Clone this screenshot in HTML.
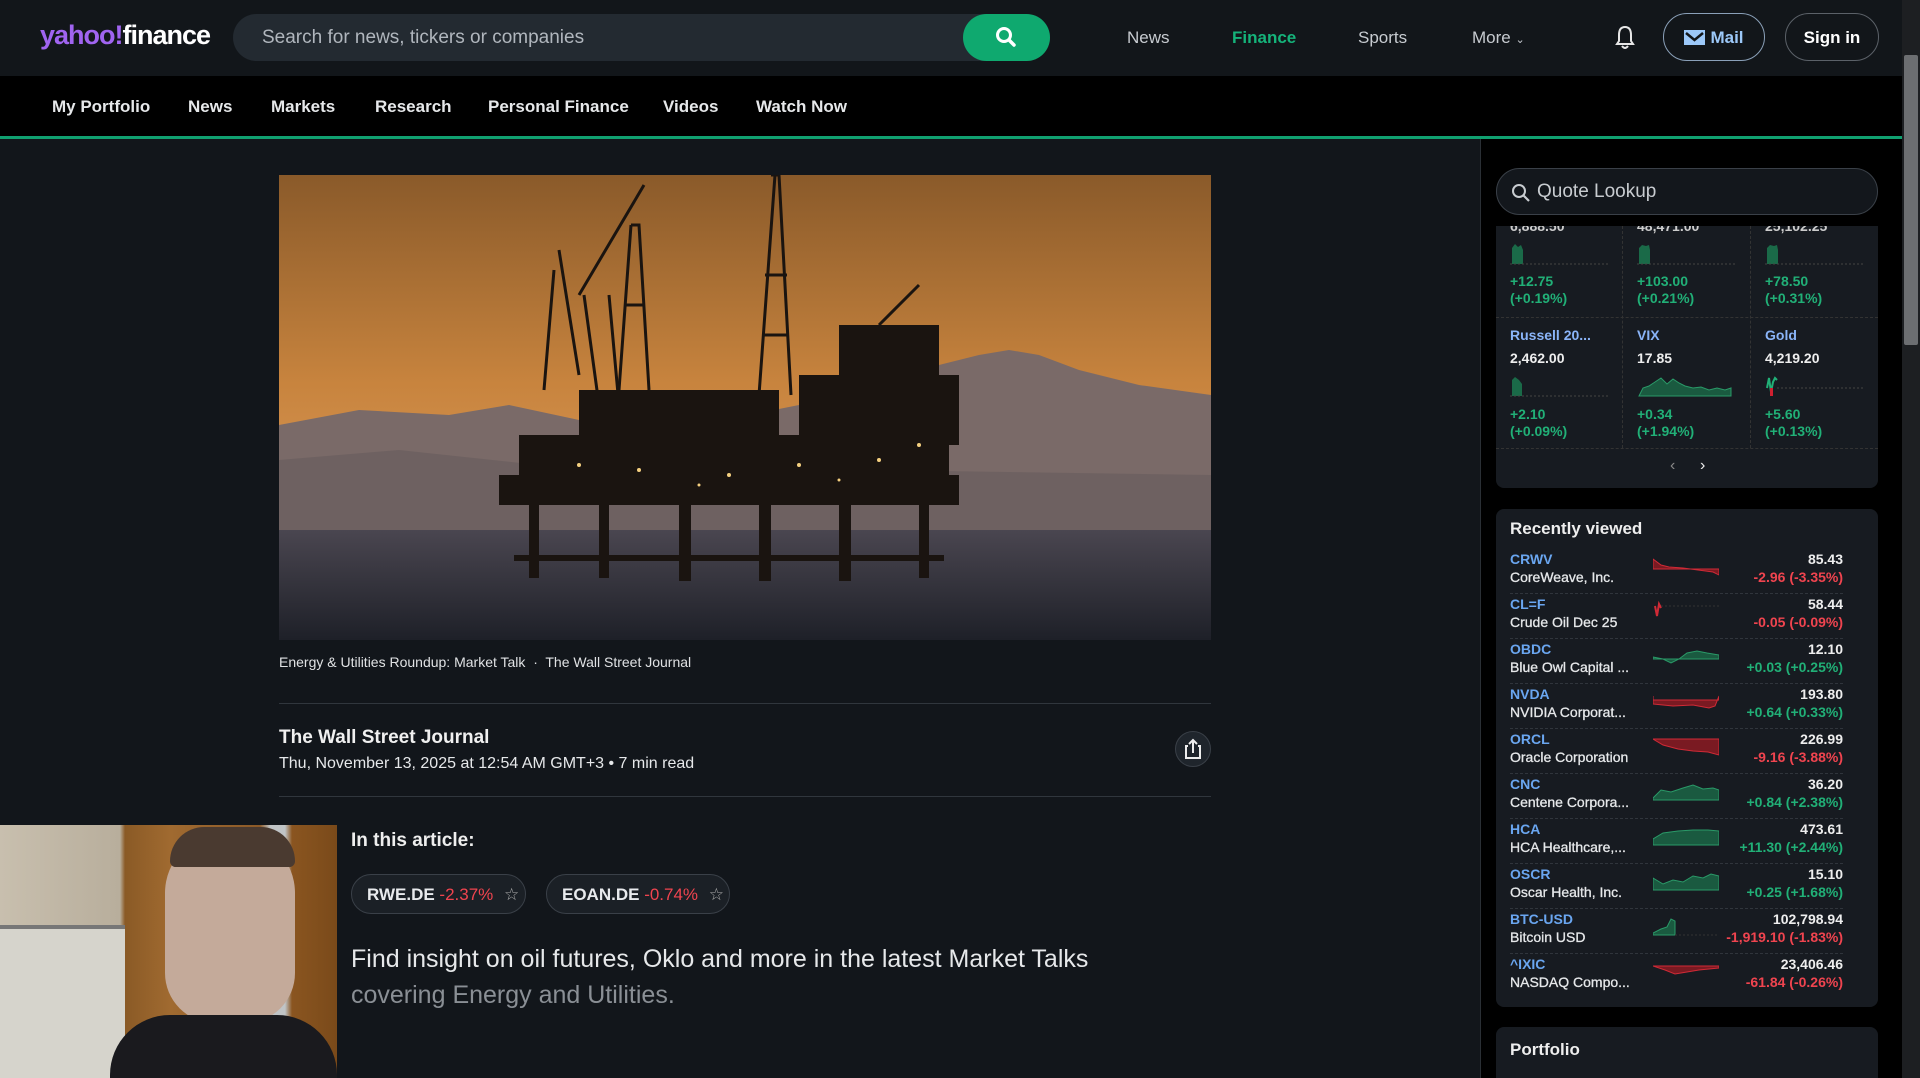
<!DOCTYPE html>
<html style="overflow:hidden;height:1078px"><head><meta charset="utf-8">
<style>
*{box-sizing:border-box;margin:0;padding:0}
body{width:1920px;height:1078px;overflow:hidden;background:#12161b;font-family:"Liberation Sans",Arial,sans-serif;color:#e8eaed;position:relative}
.abs{position:absolute}
.hdr{left:0;top:0;width:1902px;height:76px;background:#12161a}
.logo{left:40px;top:20px;font-size:27px;font-weight:bold;letter-spacing:-1px}
.search{left:233px;top:14px;width:817px;height:47px;border-radius:24px;background:#232a31;color:#b0b6bd;font-size:19px;padding:13px 0 0 29px}
.sbtn{left:963px;top:14px;width:87px;height:47px;border-radius:24px;background:#0fa96f}
.hl{top:28px;font-size:17px;color:#c7cbd0}
.pill{top:13px;height:48px;border-radius:24px;border:1.5px solid #5b6168;font-size:17px;font-weight:bold;color:#fff;text-align:center;padding-top:14px}
.sub{left:0;top:76px;width:1902px;height:60px;background:#000}
.sub span{position:absolute;top:21px;font-size:17px;font-weight:bold;color:#e6e8ea}
.gline{left:0;top:136px;width:1902px;height:3px;background:#10a070}
.side{left:1480px;top:139px;width:422px;height:939px;background:#000;border-left:1px solid #2a2f35}
.card{background:#171b21;border-radius:8px}
.scroll{left:1902px;top:0;width:18px;height:1078px;background:#1d1f22}
.g{color:#21b077}.r{color:#f0444f}.b{color:#8ab4f8}
.mk{position:absolute;font-size:14px;font-weight:bold;line-height:17px}
.row{position:absolute;left:14px;width:333px;height:45px;border-bottom:1px dashed #30353c;font-size:14px;font-weight:bold;line-height:18px}
.row .t{position:absolute;left:0;top:1px;color:#6aa6f0}
.row .n{position:absolute;left:0;top:19px;color:#e6e8ea;font-weight:normal;-webkit-text-stroke:.3px #e6e8ea}
.row .p{position:absolute;right:0;top:1px;color:#eee}
.row .c{position:absolute;right:0;top:19px}
.row svg{position:absolute;left:143px;top:6px}
.chip{top:874px;height:40px;border-radius:20px;border:1px solid #3a4048;background:#1b2026;font-size:17px;font-weight:bold;padding-top:10px;padding-left:15px}
</style></head><body>
<div class="abs hdr"></div>
<div class="abs logo"><span style="color:#a064f0">yahoo</span><span style="color:#a064f0">!</span><span style="color:#fff">finance</span></div>
<div class="abs search">Search for news, tickers or companies</div>
<div class="abs sbtn"><svg width="87" height="47"><circle cx="41" cy="21" r="6.5" fill="none" stroke="#fff" stroke-width="3"/><line x1="46" y1="26" x2="51" y2="31" stroke="#fff" stroke-width="3.5" stroke-linecap="round"/></svg></div>
<div class="abs hl" style="left:1127px">News</div>
<div class="abs hl" style="left:1232px;color:#15b37a;font-weight:bold">Finance</div>
<div class="abs hl" style="left:1358px">Sports</div>
<div class="abs hl" style="left:1472px">More <span style="font-size:11px">&#8964;</span></div>
<svg class="abs" style="left:1614px;top:25px" width="22" height="26"><path d="M11 2 C6 2 5 6 5 10 L5 16 L3 19 L19 19 L17 16 L17 10 C17 6 16 2 11 2Z M8 21 Q11 25 14 21" fill="none" stroke="#e6e6e6" stroke-width="2"/></svg>
<div class="abs pill" style="left:1663px;width:102px;border-color:#8aa0b8"><span style="display:inline-block;width:21px;height:15px;background:#9cc8f8;vertical-align:-2px;margin-right:5px;position:relative"><svg width="21" height="15" style="position:absolute;left:0;top:0"><path d="M2 3 L10.5 10 L19 3" fill="none" stroke="#12161a" stroke-width="2.5"/></svg></span><span style="color:#9cc8f8">Mail</span></div>
<div class="abs pill" style="left:1785px;width:94px">Sign in</div>
<div class="abs sub"><span style="left:52px">My Portfolio</span><span style="left:188px">News</span><span style="left:271px">Markets</span><span style="left:375px">Research</span><span style="left:488px">Personal Finance</span><span style="left:663px">Videos</span><span style="left:756px">Watch Now</span></div>
<div class="abs gline"></div>

<svg class="abs" style="left:279px;top:175px" width="932" height="465" viewBox="0 0 932 465">
<defs><linearGradient id="sky" x1="0" y1="0" x2="0" y2="1"><stop offset="0" stop-color="#8a5a2a"/><stop offset=".45" stop-color="#c8843e"/><stop offset=".75" stop-color="#d89858"/></linearGradient>
<linearGradient id="sea" x1="0" y1="0" x2="0" y2="1"><stop offset="0" stop-color="#4a4650"/><stop offset="1" stop-color="#1e2028"/></linearGradient></defs>
<rect width="932" height="465" fill="url(#sky)"/>
<path d="M0 250 L80 235 L170 240 L230 230 L300 245 L420 250 L520 230 L600 210 L660 190 L700 180 L730 175 L760 180 L800 195 L860 210 L932 220 L932 360 L0 360Z" fill="#7a6a68"/>
<path d="M0 285 L120 275 L260 290 L932 300 L932 360 L0 360Z" fill="#6a5e5e" opacity=".7"/>
<rect y="355" width="932" height="110" fill="url(#sea)"/>
<g fill="#1a1410">
<rect x="220" y="300" width="460" height="30"/>
<rect x="240" y="260" width="430" height="42"/>
<rect x="300" y="215" width="200" height="50"/>
<rect x="520" y="200" width="160" height="70"/>
<rect x="560" y="150" width="100" height="55"/>
<rect x="250" y="328" width="10" height="75"/><rect x="320" y="328" width="10" height="75"/><rect x="400" y="328" width="12" height="78"/><rect x="480" y="328" width="12" height="78"/><rect x="560" y="328" width="12" height="78"/><rect x="640" y="328" width="10" height="75"/>
<rect x="235" y="380" width="430" height="6"/>
</g>
<g stroke="#1a1410" fill="none" stroke-width="3">
<path d="M352 50 L360 50 L370 215 M352 50 L340 215 M345 130 L365 130"/>
<path d="M300 120 L365 10 M305 120 L320 230 M330 120 L340 230"/>
<path d="M492 0 L500 0 L512 220 M496 0 L480 220 M486 100 L508 100 M484 160 L510 160"/>
<path d="M280 75 L300 200 M275 95 L265 215"/>
<path d="M600 150 L640 110"/>
</g>
<g fill="#f5d080"><circle cx="300" cy="290" r="2"/><circle cx="360" cy="295" r="2"/><circle cx="450" cy="300" r="2"/><circle cx="520" cy="290" r="2"/><circle cx="600" cy="285" r="2"/><circle cx="420" cy="310" r="1.5"/><circle cx="560" cy="305" r="1.5"/><circle cx="640" cy="270" r="2"/></g>
</svg>
<div class="abs" style="left:279px;top:654px;font-size:14px;color:#e0e2e4">Energy &amp; Utilities Roundup: Market Talk &nbsp;·&nbsp; The Wall Street Journal</div>
<div class="abs" style="left:279px;top:703px;width:932px;height:1px;background:#30363d"></div>
<div class="abs" style="left:279px;top:727px;font-size:19px;font-weight:bold;color:#f0f0f0">The Wall Street Journal</div>
<div class="abs" style="left:279px;top:755px;font-size:16px;color:#e6e8ea">Thu, November 13, 2025 at 12:54 AM GMT+3 • 7 min read</div>
<div class="abs" style="left:1175px;top:731px;width:36px;height:36px;border-radius:18px;background:#1f252c;border:1px solid #3a4048"><svg width="34" height="34"><path d="M12 14 L10 14 L10 26 L24 26 L24 14 L22 14 M17 21 L17 8 M13 12 L17 8 L21 12" fill="none" stroke="#eee" stroke-width="2"/></svg></div>
<div class="abs" style="left:279px;top:796px;width:932px;height:1px;background:#30363d"></div>
<div class="abs" style="left:351px;top:830px;font-size:19px;font-weight:bold;color:#eee">In this article:</div>
<div class="abs chip" style="left:351px;width:175px">RWE.DE <span class="r" style="font-weight:normal">-2.37%</span> <span style="color:#aaa;font-weight:normal;margin-left:6px">☆</span></div>
<div class="abs chip" style="left:546px;width:184px">EOAN.DE <span class="r" style="font-weight:normal">-0.74%</span> <span style="color:#aaa;font-weight:normal;margin-left:6px">☆</span></div>
<div class="abs" style="left:351px;top:945px;font-size:25px;color:#e6e8ea">Find insight on oil futures, Oklo and more in the latest Market Talks</div>
<div class="abs" style="left:351px;top:981px;font-size:25px;color:#8a8f95">covering Energy and Utilities.</div>

<div class="abs" style="left:0;top:825px;width:337px;height:253px;overflow:hidden;background:linear-gradient(90deg,#c8bfae 0,#b8ae9c 120px,#8a5a26 125px,#a06a30 170px,#8c5a28 260px,#c0c4c6 270px,#c0c4c6 285px,#8a5520 292px,#7a4a1a 337px)">
<div class="abs" style="left:0;top:100px;width:125px;height:153px;background:#d6d4cc;border-top:4px solid #777"></div>
<div class="abs" style="left:165px;top:8px;width:130px;height:190px;border-radius:60px 60px 50px 50px;background:#c4aa9a"></div>
<div class="abs" style="left:170px;top:2px;width:125px;height:40px;border-radius:60px 60px 10px 10px;background:#4a3a30"></div>
<div class="abs" style="left:110px;top:190px;width:227px;height:70px;border-radius:60px 60px 0 0;background:#1a1a1e"></div>
</div>

<div class="abs side"></div>
<div class="abs" style="left:1496px;top:168px;width:382px;height:47px;border-radius:24px;border:1px solid #3a4048;background:#13171c;color:#c8ccd0;font-size:19px;padding:12px 0 0 40px">Quote Lookup
<svg class="abs" style="left:14px;top:14px" width="20" height="20"><circle cx="8" cy="8" r="6" fill="none" stroke="#c8ccd0" stroke-width="2"/><line x1="12.5" y1="12.5" x2="18" y2="18" stroke="#c8ccd0" stroke-width="2.2"/></svg></div>
<div class="abs card" style="left:1496px;top:226px;width:382px;height:262px;border-radius:0 0 8px 8px;overflow:hidden">
<div class="abs" style="left:126px;top:0;width:1px;height:222px;border-left:1px dashed #333"></div>
<div class="abs" style="left:254px;top:0;width:1px;height:222px;border-left:1px dashed #333"></div>
<div class="abs" style="left:0;top:91px;width:382px;border-top:1px dashed #333"></div>
<div class="abs" style="left:0;top:222px;width:382px;border-top:1px dashed #333"></div>
<div class="mk" style="left:14px;top:-8px;color:#ccc">6,888.50</div><div class="mk" style="left:141px;top:-8px;color:#ccc">48,471.00</div><div class="mk" style="left:269px;top:-8px;color:#ccc">25,102.25</div>
<svg class="abs" style="left:14px;top:16px" width="100" height="24"><path d="M2 22 L2 6 L5 2 L8 5 L11 3 L13 8 L13 22Z" fill="#1a6a48"/><line x1="0" y1="22" x2="100" y2="22" stroke="#444" stroke-dasharray="2 2"/></svg>
<svg class="abs" style="left:141px;top:16px" width="100" height="24"><path d="M2 22 L2 6 L5 3 L9 4 L12 3 L13 8 L13 22Z" fill="#1a6a48"/><line x1="0" y1="22" x2="100" y2="22" stroke="#444" stroke-dasharray="2 2"/></svg>
<svg class="abs" style="left:269px;top:16px" width="100" height="24"><path d="M2 22 L2 6 L5 3 L9 4 L12 3 L13 8 L13 22Z" fill="#1a6a48"/><line x1="0" y1="22" x2="100" y2="22" stroke="#444" stroke-dasharray="2 2"/></svg>
<div class="mk g" style="left:14px;top:47px">+12.75<br>(+0.19%)</div><div class="mk g" style="left:141px;top:47px">+103.00<br>(+0.21%)</div><div class="mk g" style="left:269px;top:47px">+78.50<br>(+0.31%)</div>
<div class="mk b" style="left:14px;top:101px">Russell 20...</div><div class="mk b" style="left:141px;top:101px">VIX</div><div class="mk b" style="left:269px;top:101px">Gold</div>
<div class="mk" style="left:14px;top:124px;color:#eee">2,462.00</div><div class="mk" style="left:141px;top:124px;color:#eee">17.85</div><div class="mk" style="left:269px;top:124px;color:#eee">4,219.20</div>
<svg class="abs" style="left:14px;top:148px" width="100" height="24"><path d="M2 22 L2 6 L5 3 L9 6 L12 10 L12 22Z" fill="#1a6a48"/><line x1="0" y1="22" x2="100" y2="22" stroke="#444" stroke-dasharray="2 2"/></svg>
<svg class="abs" style="left:141px;top:148px" width="100" height="24"><path d="M2 22 L6 14 L12 12 L18 8 L24 4 L30 10 L36 5 L42 9 L48 12 L56 14 L64 13 L72 16 L80 14 L88 16 L94 14 L94 22Z" fill="#1a5a40" stroke="#2a9a68"/></svg>
<svg class="abs" style="left:269px;top:148px" width="100" height="24"><path d="M2 14 L4 4 L6 18 L8 8 L10 4 L12 6" fill="none" stroke="#21b077" stroke-width="2"/><rect x="5" y="14" width="3" height="8" fill="#d02030"/><line x1="12" y1="14" x2="100" y2="14" stroke="#444" stroke-dasharray="2 2"/></svg>
<div class="mk g" style="left:14px;top:180px">+2.10<br>(+0.09%)</div><div class="mk g" style="left:141px;top:180px">+0.34<br>(+1.94%)</div><div class="mk g" style="left:269px;top:180px">+5.60<br>(+0.13%)</div>
<div class="abs" style="left:174px;top:231px;color:#888;font-size:16px">‹</div><div class="abs" style="left:204px;top:231px;color:#eee;font-size:16px">›</div>
</div>

<div class="abs card" style="left:1496px;top:509px;width:382px;height:498px">
<div class="abs" style="left:14px;top:10px;font-size:17px;font-weight:bold;color:#eee">Recently viewed</div>
<div class="row" style="top:40px"><span class="t">CRWV</span><span class="n">CoreWeave, Inc.</span><svg width="66" height="30"><path d="M0 4 L8 10 L16 12 L30 13 L45 15 L60 17 L66 20 L66 14 L0 14Z" fill="#7a1a22" stroke="#d02a36"/></svg><span class="p">85.43</span><span class="c r">-2.96 (-3.35%)</span></div>
<div class="row" style="top:85px"><span class="t">CL=F</span><span class="n">Crude Oil Dec 25</span><svg width="66" height="30"><path d="M2 6 L4 16 L6 4 L8 8" fill="none" stroke="#d02a36" stroke-width="2"/><line x1="8" y1="6" x2="66" y2="6" stroke="#333" stroke-dasharray="2 2"/></svg><span class="p">58.44</span><span class="c r">-0.05 (-0.09%)</span></div>
<div class="row" style="top:130px"><span class="t">OBDC</span><span class="n">Blue Owl Capital ...</span><svg width="66" height="30"><path d="M0 12 L10 14 L18 18 L26 14 L34 8 L44 6 L54 8 L66 10 L66 14 L0 14Z" fill="#1a5a40" stroke="#2a9a68"/></svg><span class="p">12.10</span><span class="c g">+0.03 (+0.25%)</span></div>
<div class="row" style="top:175px"><span class="t">NVDA</span><span class="n">NVIDIA Corporat...</span><svg width="66" height="30"><path d="M0 6 L0 14 L20 16 L40 15 L56 18 L62 16 L66 6 L66 10 L0 10Z" fill="#7a1a22" stroke="#d02a36"/></svg><span class="p">193.80</span><span class="c g">+0.64 (+0.33%)</span></div>
<div class="row" style="top:220px"><span class="t">ORCL</span><span class="n">Oracle Corporation</span><svg width="66" height="30"><path d="M0 4 L10 10 L25 14 L40 16 L55 17 L66 20 L66 4Z" fill="#7a1a22" stroke="#d02a36"/></svg><span class="p">226.99</span><span class="c r">-9.16 (-3.88%)</span></div>
<div class="row" style="top:265px"><span class="t">CNC</span><span class="n">Centene Corpora...</span><svg width="66" height="30"><path d="M0 18 L8 10 L18 12 L30 8 L40 5 L50 9 L60 8 L66 10 L66 20 L0 20Z" fill="#1a5a40" stroke="#2a9a68"/></svg><span class="p">36.20</span><span class="c g">+0.84 (+2.38%)</span></div>
<div class="row" style="top:310px"><span class="t">HCA</span><span class="n">HCA Healthcare,...</span><svg width="66" height="30"><path d="M0 14 L10 8 L25 6 L40 5 L55 5 L66 6 L66 20 L0 20Z" fill="#1a5a40" stroke="#2a9a68"/></svg><span class="p">473.61</span><span class="c g">+11.30 (+2.44%)</span></div>
<div class="row" style="top:355px"><span class="t">OSCR</span><span class="n">Oscar Health, Inc.</span><svg width="66" height="30"><path d="M0 8 L10 14 L20 10 L30 12 L40 6 L50 8 L58 4 L66 6 L66 20 L0 20Z" fill="#1a5a40" stroke="#2a9a68"/></svg><span class="p">15.10</span><span class="c g">+0.25 (+1.68%)</span></div>
<div class="row" style="top:400px"><span class="t">BTC-USD</span><span class="n">Bitcoin USD</span><svg width="66" height="30"><path d="M0 18 L8 14 L14 12 L18 4 L22 6 L22 20 L0 20Z" fill="#1a5a40" stroke="#2a9a68"/><line x1="22" y1="20" x2="66" y2="20" stroke="#333" stroke-dasharray="2 2"/></svg><span class="p">102,798.94</span><span class="c r">-1,919.10 (-1.83%)</span></div>
<div class="row" style="top:445px;border-bottom:none"><span class="t">^IXIC</span><span class="n">NASDAQ Compo...</span><svg width="66" height="30"><path d="M0 6 L12 10 L22 14 L34 12 L46 10 L66 8 L66 6Z" fill="#7a1a22" stroke="#d02a36"/></svg><span class="p">23,406.46</span><span class="c r">-61.84 (-0.26%)</span></div>
</div>
<div class="abs card" style="left:1496px;top:1027px;width:382px;height:51px;border-radius:8px 8px 0 0"><div class="abs" style="left:14px;top:13px;font-size:17px;font-weight:bold;color:#eee">Portfolio</div></div>

<div class="abs scroll"><div class="abs" style="left:2px;top:55px;width:14px;height:290px;background:#6c6e71;border-radius:2px"></div></div>
</body></html>
